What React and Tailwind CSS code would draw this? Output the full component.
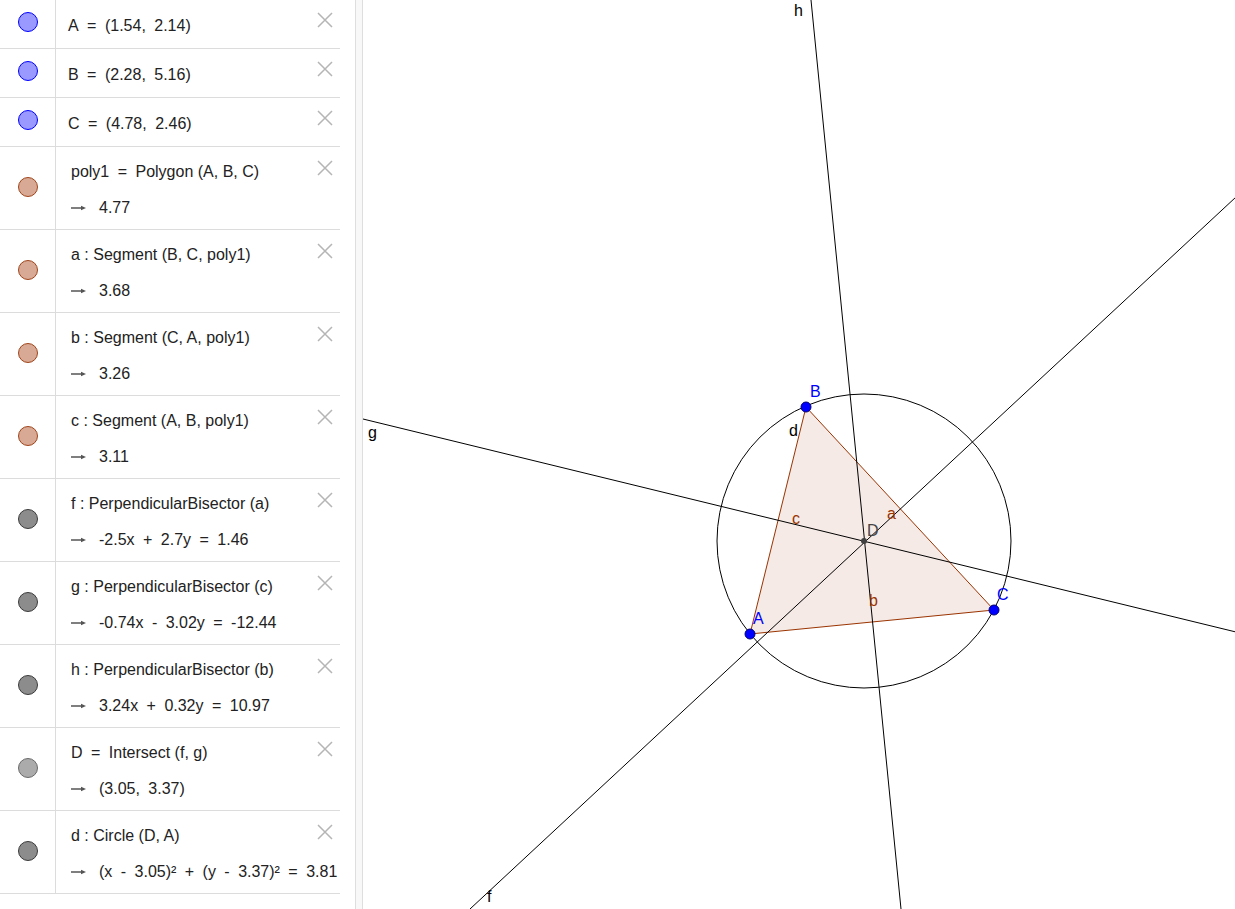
import React from "react";

const rows = [
  { kind: "point", text: "A = (1.54, 2.14)" },
  { kind: "point", text: "B = (2.28, 5.16)" },
  { kind: "point", text: "C = (4.78, 2.46)" },
  { kind: "poly", text: "poly1 = Polygon (A, B, C)", value: "4.77" },
  { kind: "poly", text: "a : Segment (B, C, poly1)", value: "3.68" },
  { kind: "poly", text: "b : Segment (C, A, poly1)", value: "3.26" },
  { kind: "poly", text: "c : Segment (A, B, poly1)", value: "3.11" },
  { kind: "line", text: "f : PerpendicularBisector (a)", value: "-2.5x + 2.7y = 1.46" },
  { kind: "line", text: "g : PerpendicularBisector (c)", value: "-0.74x - 3.02y = -12.44" },
  { kind: "line", text: "h : PerpendicularBisector (b)", value: "3.24x + 0.32y = 10.97" },
  { kind: "inter", text: "D = Intersect (f, g)", value: "(3.05, 3.37)" },
  { kind: "line", text: "d : Circle (D, A)", value: "(x - 3.05)² + (y - 3.37)² = 3.81" },
];

const markerClass = {
  point: "bg-[#9999ff] border-[#0000ff]",
  poly: "bg-[#d8aa96] border-[#a0441a]",
  line: "bg-[#8c8c8c] border-[#3a3a3a]",
  inter: "bg-[#ababab] border-[#6a6a6a]",
};

// math-ish spacing around operators and numeric commas, like the algebra view
function MathText({ text }) {
  const parts = text.split(/( = | \+ | - |, (?=[\d-]))/);
  return (
    <>
      {parts.map((p, i) => {
        if (i % 2 === 0) return <React.Fragment key={i}>{p}</React.Fragment>;
        if (p.startsWith(","))
          return (
            <span key={i} className="pr-[4px]">
              {p}
            </span>
          );
        return (
          <span key={i} className="px-[4px]">
            {p}
          </span>
        );
      })}
    </>
  );
}

function CloseIcon() {
  return (
    <svg width="18" height="18" viewBox="0 0 18 18" className="block">
      <path d="M2 2 L16 16 M16 2 L2 16" stroke="#b5b5b5" strokeWidth="1.5" fill="none" />
    </svg>
  );
}

function Arrow() {
  return (
    <svg width="16" height="8" viewBox="0 0 16 8" className="block">
      <path d="M0 4 H13" stroke="#555" strokeWidth="1.5" />
      <path d="M10 1.8 L15 4 L10 6.2 Z" fill="#555" />
    </svg>
  );
}

function Row({ row }) {
  const two = !!row.value;
  return (
    <div className={`flex border-b border-[#dcdcdc] ${two ? "h-[83px]" : "h-[49px]"}`}>
      <div className="w-[56px] shrink-0 border-r border-[#dcdcdc] flex justify-center">
        <div
          className={`w-[20px] h-[20px] rounded-full border ${markerClass[row.kind]} ${two ? "mt-[30px]" : "mt-[12px]"}`}
        />
      </div>
      <div className="flex-1 relative">
        {two ? (
          <div className="pl-[15px] pt-[15px] flex flex-col gap-[17px] text-[16px] leading-[19px] text-[#222] whitespace-nowrap">
            <div>
              <MathText text={row.text} />
            </div>
            <div className="flex items-center">
              <Arrow />
              <span className="ml-[12px]">
                <MathText text={row.value} />
              </span>
            </div>
          </div>
        ) : (
          <div className="pl-[12px] pt-[16px] text-[16px] leading-[19px] text-[#222] whitespace-nowrap">
            <MathText text={row.text} />
          </div>
        )}
        <div className={`absolute right-[6px] ${two ? "top-[12px]" : "top-[11px]"}`}>
          <CloseIcon />
        </div>
      </div>
    </div>
  );
}

function Canvas() {
  const A = [749, 634];
  const B = [805, 407];
  const C = [993, 610];
  const D = [863, 541];
  const lbl = "font-['Liberation_Sans',Arial,sans-serif] text-[16px]";
  return (
    <svg width="873" height="909" viewBox="362 0 873 909" className="block">
      <polygon
        points={`${A.join(",")} ${B.join(",")} ${C.join(",")}`}
        fill="#993300"
        fillOpacity="0.1"
        stroke="#993300"
        strokeWidth="1"
      />
      <circle cx={D[0]} cy={D[1]} r="147" fill="none" stroke="#000" strokeWidth="1" />
      <line x1="810" y1="0" x2="900" y2="909" stroke="#000" strokeWidth="1" />
      <line x1="362" y1="419" x2="1235" y2="632" stroke="#000" strokeWidth="1" />
      <line x1="469" y1="909" x2="1235" y2="197" stroke="#000" strokeWidth="1" />
      <circle cx={D[0]} cy={D[1]} r="3" fill="#404040" />
      {[A, B, C].map((p, i) => (
        <circle key={i} cx={p[0]} cy={p[1]} r="5" fill="#0000ff" stroke="#00007a" strokeWidth="1" />
      ))}
      <text x="793" y="16" fill="#000" className={lbl}>h</text>
      <text x="367" y="438" fill="#000" className={lbl}>g</text>
      <text x="486" y="902" fill="#000" className={lbl}>f</text>
      <text x="788" y="436" fill="#000" className={lbl}>d</text>
      <text x="791" y="524" fill="#993300" className={lbl}>c</text>
      <text x="886" y="519" fill="#993300" className={lbl}>a</text>
      <text x="868" y="606" fill="#993300" className={lbl}>b</text>
      <text x="866" y="536" fill="#444" className={lbl}>D</text>
      <text x="809" y="397" fill="#0000ff" className={lbl}>B</text>
      <text x="752" y="624" fill="#0000ff" className={lbl}>A</text>
      <text x="996" y="600" fill="#0000ff" className={lbl}>C</text>
    </svg>
  );
}

export default function App() {
  return (
    <div className="w-[1235px] h-[909px] flex bg-white overflow-hidden font-['Liberation_Sans',Arial,sans-serif]">
      {/* Algebra view */}
      <div className="w-[340px] shrink-0">
        {rows.map((r, i) => (
          <Row key={i} row={r} />
        ))}
      </div>
      <div className="w-[15px] shrink-0" />
      {/* Splitter */}
      <div className="w-[8px] shrink-0 bg-[#f8f8f8] border-x border-[#dedede]" />
      {/* Graphics view */}
      <div className="flex-1 overflow-hidden">
        <Canvas />
      </div>
    </div>
  );
}
